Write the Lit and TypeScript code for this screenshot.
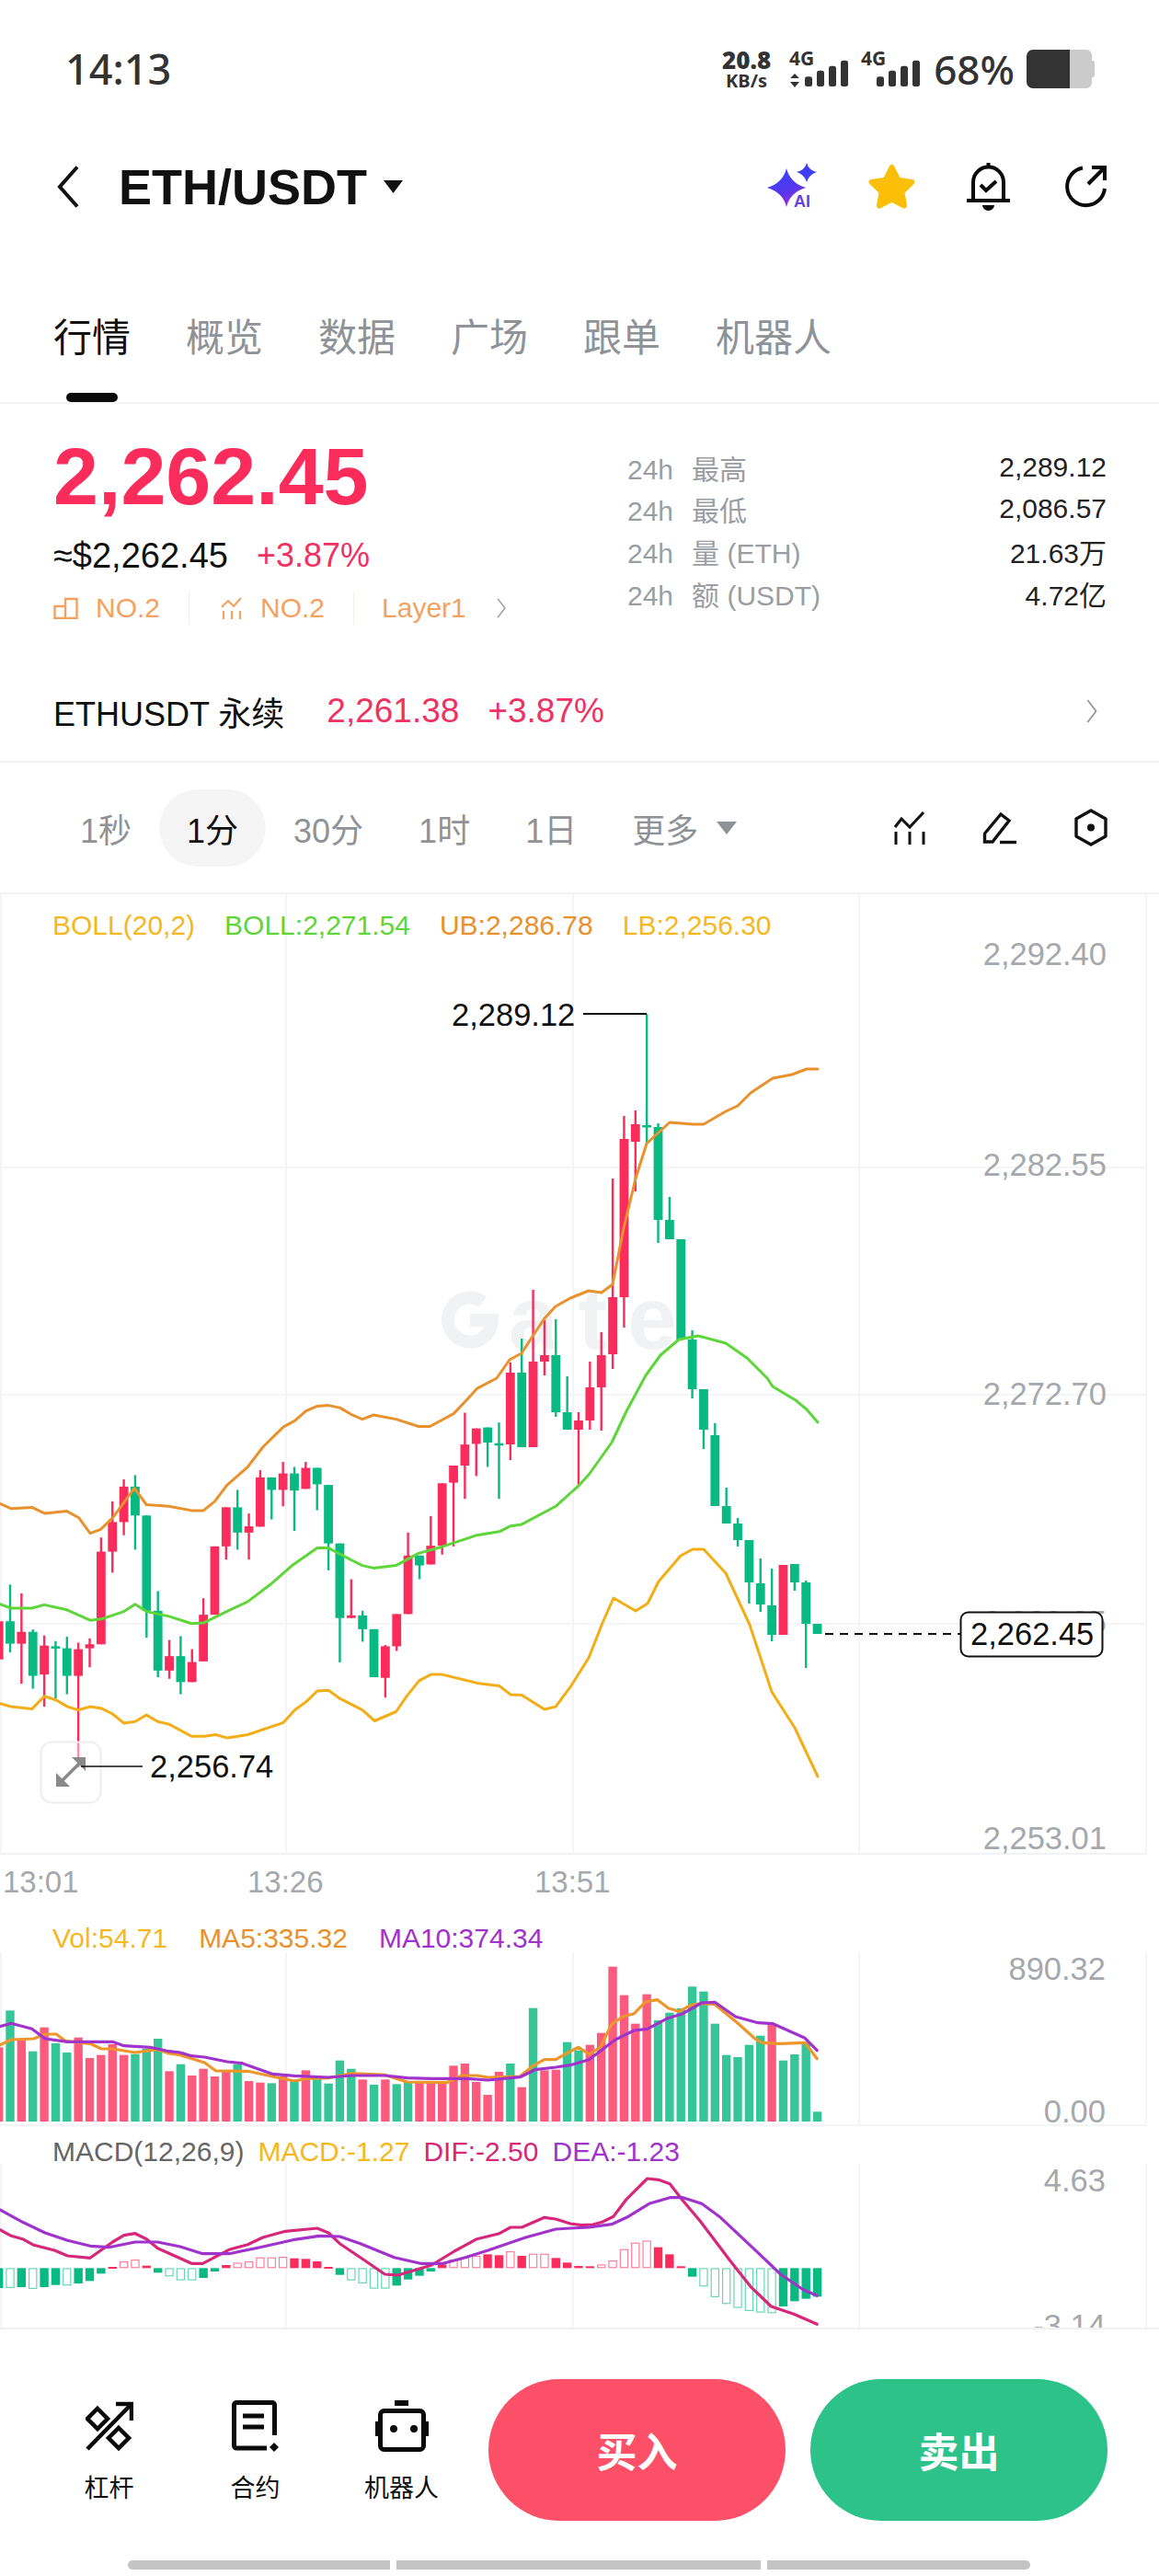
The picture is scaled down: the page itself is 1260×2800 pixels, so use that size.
import { LitElement, html, svg, css } from 'lit';
import { customElement } from 'lit/decorators.js';

// chart numbers were read off zoomed crops, so most series keep the crop's own
// coordinates and get converted to page pixels here
const RED = '#fa2c5c';
const GREEN = '#08b981';
const cx = (k: number) => 11 + 12.36 * k;
const x5 = (z: number) => z / 2.45;
const x6 = (z: number) => 620 + z / 2.45;
const y5 = (z: number) => 1500 + z / 2.8;
const y7 = (z: number) => 2060 + z / 3;

type Candle = [number, number, number, number, 'r' | 'g'];

// k = -1 .. 43: wick top, body top, body bottom, wick bottom
const candlesLeft: Candle[] = ([
  [740, 740, 856, 960, 'r'], [628, 740, 808, 835, 'g'], [655, 772, 808, 930, 'r'], [765, 772, 906, 945, 'g'],
  [783, 814, 902, 1000, 'r'], [800, 816, 822, 975, 'g'], [787, 822, 906, 962, 'g'], [805, 825, 906, 1185, 'r'],
  [792, 810, 822, 880, 'r'], [485, 528, 810, 810, 'r'], [375, 438, 528, 592, 'r'], [308, 330, 438, 478, 'r'],
  [295, 330, 418, 522, 'g'], [418, 418, 708, 790, 'g'], [648, 708, 890, 910, 'g'], [797, 846, 890, 915, 'r'],
  [785, 846, 925, 962, 'g'], [825, 864, 925, 925, 'r'], [670, 720, 862, 862, 'r'], [512, 512, 720, 720, 'r'],
  [393, 393, 512, 552, 'r'], [340, 393, 470, 522, 'g'], [412, 451, 470, 552, 'r'], [280, 302, 452, 452, 'r'],
  [302, 302, 340, 430, 'g'], [255, 290, 340, 390, 'r'], [270, 290, 342, 465, 'g'], [255, 273, 337, 337, 'r'],
  [273, 273, 323, 402, 'g'], [325, 325, 503, 585, 'g'], [503, 503, 730, 865, 'g'], [612, 722, 730, 730, 'r'],
  [708, 722, 764, 802, 'g'], [764, 764, 910, 910, 'g'], [812, 816, 912, 972, 'r'], [718, 718, 816, 830, 'r'],
  [470, 540, 718, 718, 'r'], [540, 540, 570, 612, 'g'], [420, 510, 567, 567, 'r'], [320, 320, 510, 537, 'r'],
  [266, 266, 318, 512, 'r'], [105, 202, 266, 367, 'r'], [153, 153, 200, 298, 'r'], [150, 150, 196, 270, 'g'],
  [135, 198, 203, 367, 'g'],
] as Candle[]).map(([a, b, c, d, e]) => [y5(a), y5(b), y5(c), y5(d), e] as Candle);

// k = 44 .. 71, already in page pixels
const candlesRight: Candle[] = [
  [1483, 1494, 1572, 1589, 'r'], [1457, 1494, 1575, 1575, 'g'], [1404, 1482, 1575, 1575, 'r'], [1437, 1475, 1482, 1497, 'r'],
  [1436, 1475, 1537, 1542, 'g'], [1498, 1537, 1556, 1556, 'g'], [1537, 1546, 1556, 1618, 'r'], [1482, 1510, 1546, 1556, 'r'],
  [1450, 1475, 1510, 1557, 'r'], [1283, 1412, 1474, 1490, 'r'], [1215, 1240, 1412, 1445, 'r'], [1209, 1224, 1243, 1297, 'r'],
  [1104, 1225, 1227, 1245, 'g'], [1223, 1227, 1328, 1353, 'g'], [1303, 1328, 1349, 1349, 'g'], [1349, 1349, 1458, 1458, 'g'],
  [1448, 1458, 1512, 1522, 'g'], [1512, 1512, 1556, 1577, 'g'], [1549, 1562, 1639, 1639, 'g'], [1619, 1639, 1658, 1658, 'g'],
  [1652, 1658, 1676, 1683, 'g'], [1676, 1676, 1722, 1745, 'g'], [1696, 1723, 1746, 1754, 'g'], [1707, 1747, 1779, 1786, 'g'],
  [1703, 1703, 1779, 1779, 'r'], [1702, 1702, 1722, 1731, 'g'], [1720, 1722, 1767, 1815, 'g'], [1767, 1767, 1778, 1778, 'g'],
];

const pts = (list: number[][], fx: (z: number) => number, fy: (z: number) => number) =>
  list.map(([a, b]) => `${fx(a).toFixed(1)},${fy(b).toFixed(1)}`).join(' ');
const raw = (list: number[][]) => list.map((p) => p.join(',')).join(' ');

const upperBand = [
  pts([[0, 382], [30, 397], [85, 393], [120, 412], [178, 405], [210, 425], [240, 472], [268, 460], [300, 425], [358, 335], [390, 385], [450, 390], [510, 403], [542, 403], [572, 375], [605, 325], [660, 270], [700, 210], [755, 148], [785, 130], [815, 100], [845, 85], [875, 83], [905, 90], [935, 110], [965, 125], [995, 112], [1055, 125], [1115, 147], [1145, 147], [1208, 108], [1240, 70], [1270, 32], [1323, 0]], x5, y5),
  raw([[554, 1480], [567, 1473], [580, 1453], [592, 1435], [604, 1422], [620, 1413], [640, 1405], [654, 1407], [666, 1398], [678, 1337], [691, 1283], [703, 1245], [716, 1233], [728, 1222], [753, 1224], [765, 1224], [789, 1210], [802, 1204], [816, 1190], [840, 1174], [861, 1170], [877, 1164], [889, 1164]]),
].join(' ');

const midBand = [
  pts([[0, 688], [30, 700], [85, 700], [118, 690], [178, 705], [240, 737], [270, 733], [330, 710], [360, 688], [390, 710], [450, 725], [510, 747], [542, 745], [600, 712], [660, 680], [720, 628], [780, 568], [845, 517], [875, 517], [935, 553], [965, 570], [995, 578], [1055, 570], [1115, 533], [1178, 513], [1270, 478], [1330, 467], [1360, 450], [1390, 445], [1480, 390], [1519, 350]], x5, y5),
  raw([[628, 1618], [640, 1605], [665, 1570], [681, 1536], [702, 1497], [718, 1475], [738, 1458], [759, 1454], [789, 1462], [812, 1478], [834, 1500], [840, 1509], [865, 1524], [877, 1534], [889, 1548]]),
].join(' ');

const lowerBand = [
  pts([[0, 990], [30, 1000], [85, 1007], [118, 968], [150, 980], [180, 1000], [208, 1010], [240, 1000], [270, 1005], [300, 1022], [330, 1050], [360, 1045], [390, 1025], [420, 1045], [450, 1053], [510, 1090], [545, 1090], [575, 1085], [605, 1095], [660, 1085], [755, 1048], [785, 1010], [815, 985], [845, 952], [875, 950], [905, 975], [965, 1010], [998, 1043], [1055, 1015], [1085, 965], [1117, 920], [1148, 902], [1178, 902], [1270, 928], [1330, 937], [1360, 963], [1390, 965], [1450, 1008], [1480, 1000], [1519, 940]], x5, y5),
  raw([[640, 1804], [655, 1766], [667, 1739], [691, 1753], [704, 1745], [716, 1721], [740, 1693], [753, 1686], [765, 1686], [789, 1712], [815, 1768], [839, 1841], [864, 1880], [889, 1933]]),
].join(' ');

// volume tops, k = -1 .. 71
const volTops = [505, 385, 483, 518, 440, 492, 522, 473, 540, 530, 495, 530, 527, 510, 477, 583, 560, 597, 575, 600, 580, 560, 615, 620, 622, 600, 615, 580, 605, 623, 548, 575, 610, 627, 610, 625, 617, 620, 620, 620, 565, 558, 618, 660, 585, 558, 635, 377, 580, 578, 488, 515, 497, 458, 242, 335, 428, 332, 417, 392, 378, 307, 323, 428, 530, 537, 497, 467, 430, 548, 528, 490, 715];
const volDirs = 'rgrgrggrrrrrgggrgrrrrgrrgrgrggggrgrggrrrrrrrrgrgrrggrrrrrrggggggggggrgg';
// candle colours drive most bars but the crop disagrees in places, so they get their own string
const volColor = (k: number) => (volDirs[k + 1] === 'r' ? '#fd5b7d' : '#36c596');

const ma5 = [
  pts([[0, 497], [30, 480], [90, 477], [120, 462], [150, 462], [175, 485], [240, 493], [270, 510], [300, 510], [360, 522], [420, 512], [450, 525], [480, 530], [545, 555], [575, 582], [660, 583], [725, 600], [785, 615], [815, 607], [875, 605], [935, 590], [1025, 595], [1055, 607], [1085, 618], [1190, 620], [1230, 597], [1270, 597], [1300, 603], [1385, 600], [1420, 565], [1450, 545], [1480, 545], [1519, 518]], x5, y7),
  pts([[22, 505], [50, 528], [80, 505], [110, 430], [140, 405], [170, 395], [200, 357], [232, 350], [262, 378], [290, 388], [320, 368], [350, 362], [385, 365], [415, 395], [445, 425], [490, 475], [510, 490], [560, 493], [625, 490], [657, 542]], x6, y7),
].join(' ');

const ma10 = [
  pts([[0, 437], [30, 427], [85, 445], [120, 477], [180, 487], [300, 487], [330, 500], [400, 505], [450, 518], [480, 522], [510, 533], [545, 537], [605, 552], [645, 557], [725, 592], [785, 598], [875, 603], [935, 597], [1025, 597], [1085, 605], [1150, 607], [1240, 607], [1300, 612], [1385, 602], [1425, 578], [1480, 570], [1519, 563]], x5, y7),
  pts([[50, 545], [120, 480], [170, 450], [205, 445], [260, 410], [300, 395], [350, 360], [385, 358], [440, 405], [500, 425], [540, 428], [625, 475], [657, 515]], x6, y7),
].join(' ');

const dif = [
  pts([[0, 1100], [30, 1120], [60, 1130], [90, 1150], [145, 1167], [180, 1185], [240, 1192], [300, 1140], [330, 1118], [360, 1112], [390, 1130], [420, 1160], [510, 1210], [540, 1210], [610, 1165], [660, 1148], [700, 1125], [760, 1105], [845, 1095], [875, 1110], [905, 1145], [965, 1195], [1025, 1245], [1060, 1248], [1150, 1215], [1210, 1170], [1270, 1130], [1330, 1112], [1360, 1092], [1390, 1092], [1450, 1060], [1480, 1065], [1519, 1080]], x5, y7),
  pts([[30, 1085], [60, 1083], [85, 1075], [115, 1057], [150, 1000], [205, 933], [235, 937], [265, 950], [300, 1005], [345, 1070], [385, 1135], [425, 1200], [480, 1285], [535, 1350], [595, 1375], [657, 1408]], x6, y7),
].join(' ');

const dea = [
  pts([[0, 1035], [60, 1075], [120, 1110], [180, 1135], [240, 1153], [290, 1157], [360, 1140], [420, 1140], [480, 1155], [540, 1178], [610, 1178], [690, 1158], [780, 1133], [850, 1120], [905, 1122], [960, 1145], [1050, 1190], [1120, 1210], [1180, 1210], [1240, 1190], [1300, 1167], [1400, 1125], [1480, 1098], [1519, 1095]], x5, y7),
  pts([[50, 1092], [110, 1082], [150, 1060], [210, 1015], [265, 995], [300, 995], [350, 1015], [400, 1060], [500, 1175], [560, 1245], [620, 1295], [657, 1315]], x6, y7),
].join(' ');

// macd bars, k = -1 .. 71: far end of the bar, h = hollow
const ZERO = 1225;
const macd: [number, boolean][] = [
  [1290, false], [1290, true], [1287, false], [1293, true], [1287, false], [1280, false], [1282, true], [1275, false],
  [1267, false], [1243, false], [1221, false], [1203, true], [1197, true], [1217, false], [1240, false], [1252, true],
  [1265, true], [1265, true], [1257, false], [1236, false], [1215, false], [1207, true], [1203, true], [1190, true],
  [1190, true], [1188, true], [1193, false], [1195, false], [1203, false], [1221, false], [1247, false], [1265, true],
  [1275, true], [1292, true], [1292, true], [1282, false], [1262, false], [1250, false], [1236, false], [1213, false],
  [1197, true], [1190, true], [1185, true], [1180, false], [1183, false], [1170, true], [1185, false], [1178, true],
  [1178, true], [1192, false], [1207, false], [1218, false], [1219, false], [1213, true], [1200, true], [1163, true],
  [1142, true], [1135, true], [1157, false], [1180, false], [1219, false], [1253, false], [1285, true], [1320, true],
  [1342, true], [1355, true], [1365, true], [1370, true], [1372, true], [1350, false], [1333, false], [1325, false], [1318, false],
];

const chevron = (w: number, h: number, color: string) => html`
  <svg width=${w} height=${h} viewBox="0 0 14 28" fill="none" stroke=${color} stroke-width="1.8">
    <path d="M2 1 L12 14 L2 27" />
  </svg>`;

@customElement('app-root')
export class AppRoot extends LitElement {
  static styles = css`
    :host {
      display: block;
      width: 1260px;
      height: 2800px;
      overflow: hidden;
      background: #fff;
      color: #111;
      font-family: 'Liberation Sans', 'Noto Sans CJK SC', sans-serif;
    }
    svg { display: block; flex: none; }
    svg text { font-family: 'Liberation Sans', 'Noto Sans CJK SC', sans-serif; }

    .status {
      height: 150px;
      display: flex;
      align-items: center;
      padding: 0 70px 0 71px;
      color: #333;
      font-family: 'Noto Sans', sans-serif;
    }
    .clock { font-size: 45px; font-weight: 500; line-height: 50px; }
    .net {
      margin-left: auto;
      display: flex;
      flex-direction: column;
      align-items: center;
      font-weight: 700;
    }
    .net b { font-size: 26px; line-height: 25px; }
    .net span { font-size: 20px; line-height: 20px; }
    .sig { margin-left: 20px; }
    .sig + .sig { margin-left: 14px; }
    .sig text { font-family: 'Noto Sans', sans-serif; font-weight: 700; font-size: 21px; fill: #333; }
    .pct { margin-left: 15px; font-size: 44px; font-weight: 500; line-height: 50px; }
    .batt { margin-left: 13px; }

    .nav {
      height: 106px;
      display: flex;
      align-items: center;
      padding: 0 57px 0 62px;
    }
    .pair { margin-left: 43px; font-size: 54px; font-weight: 700; line-height: 60px; }
    .caret { margin-left: 18px; }
    .nav-icons { margin-left: auto; display: flex; align-items: center; }
    .ai { margin-right: 55px; }
    .fav { margin-right: 55px; }
    .bell { margin-right: 59px; }

    .tabs {
      height: 183px;
      box-sizing: border-box;
      padding: 84px 0 0 58px;
      display: flex;
      gap: 60px;
      border-bottom: 2px solid #f3f3f3;
    }
    .tab {
      display: flex;
      flex-direction: column;
      align-items: center;
      font-size: 42px;
      line-height: 56px;
      color: #8f9397;
    }
    .tab.on { color: #111; }
    .tab i {
      width: 56px;
      height: 11px;
      margin-top: 31px;
      border-radius: 6px;
    }
    .tab.on i { background: #0a0a0a; }

    .summary {
      height: 280px;
      box-sizing: border-box;
      display: grid;
      grid-template-columns: 682px 1fr;
      padding-right: 57px;
    }
    .left { padding: 29px 0 0 58px; }
    .price {
      font-size: 88px;
      font-weight: 700;
      line-height: 100px;
      color: ${css([RED] as unknown as TemplateStringsArray)};
    }
    .sub {
      margin-top: 14px;
      display: flex;
      gap: 31px;
      line-height: 44px;
      font-size: 38px;
    }
    .sub em { font-style: normal; font-size: 36px; color: #ee3263; }
    .tags {
      margin-top: 15px;
      display: flex;
      align-items: center;
      height: 40px;
      font-size: 30px;
      color: #f4a261;
    }
    .tags span { margin-left: 19px; }
    .tags .layer { margin-left: 0; }
    .tags u {
      width: 1px;
      height: 36px;
      margin: 0 34px 0 31px;
      background: #f6ede5;
    }
    .tags u.wide { margin-right: 30px; }
    .tags .more { margin-left: 31px; }
    .stats { padding-top: 46px; }
    .stat {
      height: 45.6px;
      display: flex;
      align-items: center;
      justify-content: space-between;
      font-size: 30px;
      color: #222;
    }
    .stat label { color: #9a9ea3; }
    .stat label span { margin-right: 20px; }

    .perp {
      height: 108px;
      display: flex;
      align-items: center;
      padding: 0 65px 0 58px;
      border-bottom: 2px solid #f3f3f3;
      font-size: 37px;
      color: #ee3263;
    }
    .perp .name { font-size: 36px; color: #111; margin-right: 46px; }
    .perp .chg { margin-left: 31px; }
    .perp svg { margin-left: auto; }

    .periods {
      height: 141px;
      display: flex;
      align-items: center;
      padding: 0 56px 0 57px;
      border-bottom: 2px solid #f3f3f3;
      font-size: 36px;
      color: #8f9397;
    }
    .period {
      height: 84px;
      padding: 0 30px;
      border-radius: 42px;
      display: flex;
      align-items: center;
    }
    .period.on { background: #f5f5f5; color: #111; }
    .period svg { margin-left: 20px; }
    .tools { margin-left: auto; display: flex; align-items: center; }
    .tools svg + svg { margin-left: 62px; }

    .main { position: relative; height: 1101px; }
    .legend {
      display: flex;
      font-size: 30px;
      line-height: 36px;
      white-space: nowrap;
      padding-left: 57px;
    }
    .main .legend { position: absolute; left: 0; top: 16px; gap: 32px; }
    .vol-legend { padding-top: 16px; height: 49px; box-sizing: border-box; gap: 34px; }
    .macd-legend { padding-top: 10px; height: 41px; box-sizing: border-box; gap: 15px; }
    .macd-pane { border-bottom: 2px solid #f1f1f1; }
    .yellow { color: #f5b81f; }
    .lime { color: #5ed63a; }
    .orange { color: #e8912d; }
    .purple { color: #a033cc; }
    .grey { color: #666; }
    .pink { color: #d6277a; }

    .bottom {
      display: flex;
      padding: 54px 56px 0 39px;
    }
    .action {
      width: 159px;
      height: 154px;
      box-sizing: border-box;
      padding-top: 23px;
      display: flex;
      flex-direction: column;
      align-items: center;
      font-size: 27px;
      line-height: 36px;
    }
    .action span { margin-top: 22px; }
    .btn {
      width: 323px;
      height: 154px;
      border-radius: 77px;
      display: flex;
      align-items: center;
      justify-content: center;
      color: #fff;
      font-size: 44px;
      font-weight: 700;
    }
    .buy { margin-left: 15px; background: #fb5068; }
    .sell { margin-left: 27px; background: #2cc289; }
    .home {
      margin-top: 43px;
      padding-left: 139px;
      display: flex;
      gap: 7px;
    }
    .home i { height: 10px; background: #c4c4c4; }
    .home i:first-child { width: 285px; border-radius: 5px 0 0 5px; }
    .home i:nth-child(2) { width: 396px; }
    .home i:last-child { width: 286px; border-radius: 0 5px 5px 0; }
  `;

  private bars(x: number) {
    const tops = [165, 145, 130, 112];
    return tops.map((t, i) => {
      const h = (197 - t) / 3;
      return svg`<rect x=${x + i * 13} y=${40 - h} width="8" height=${h} rx="2.5" fill="#333" />`;
    });
  }

  private grid(top: number, bottom: number, hs: number[]) {
    return svg`
      <g stroke="#f1f2f4" stroke-width="1.5">
        ${[1, 311, 623, 934, 1246].map((x) => svg`<line x1=${x} x2=${x} y1=${top} y2=${bottom} />`)}
        ${hs.map((y) => svg`<line x1="0" x2="1246" y1=${y} y2=${y} />`)}
      </g>`;
  }

  private candle(c: Candle, k: number) {
    const fill = c[4] === 'r' ? RED : GREEN;
    const x = cx(k);
    return svg`
      <rect x=${x - 1.2} y=${c[0]} width="2.4" height=${c[3] - c[0]} fill=${fill} />
      <rect x=${x - 4.9} y=${c[1]} width="9.8" height=${Math.max(c[2] - c[1], 2.5)} fill=${fill} />`;
  }

  private mainChart() {
    const axis = '#a5a8ad';
    return svg`
      <svg width="1260" height="1101" viewBox="0 974 1260 1101">
        ${this.grid(974, 2017, [1271, 1518, 1767, 2017])}
        <line x1="0" x2="1246" y1="2017" y2="2017" stroke="#f1f2f4" stroke-width="2" />
        <g fill="#f1f2f3">
          <path d="M525 1417 A24 24 0 1 0 535 1437 L511 1437" fill="none" stroke="#f1f2f3" stroke-width="14" />
          <text x="553" y="1468" font-size="96" font-weight="700" letter-spacing="22">ate</text>
        </g>
        ${candlesLeft.map((c, i) => this.candle(c, i - 1))}
        ${candlesRight.map((c, i) => this.candle(c, i + 44))}
        <g fill="none" stroke-width="3" stroke-linejoin="round" stroke-linecap="round">
          <polyline points=${upperBand} stroke="#e8912d" />
          <polyline points=${lowerBand} stroke="#f3ae17" />
          <polyline points=${midBand} stroke="#5ed63a" />
        </g>
        <g font-size="34.5" fill=${axis} text-anchor="end">
          <text x="1203" y="1051">2,292.40</text>
          <text x="1203" y="1280">2,282.55</text>
          <text x="1203" y="1529">2,272.70</text>
          <text x="1203" y="1777">2,262.85</text>
          <text x="1203" y="2012">2,253.01</text>
        </g>
        <g font-size="33" fill=${axis}>
          <text x="3" y="2059">13:01</text>
          <text x="269" y="2059">13:26</text>
          <text x="581" y="2059">13:51</text>
        </g>
        <line x1="634" x2="703" y1="1104" y2="1104" stroke="#111" stroke-width="2" />
        <text x="491" y="1117" font-size="34.5" fill="#111">2,289.12</text>
        <rect x="44.5" y="1895.5" width="65" height="66" rx="12" fill="#fff" fill-opacity="0.45" stroke="#eeeeee" stroke-width="2" />
        <g fill="#8a8a8a">
          <path d="M61 1944 V1929 L76 1944 Z" />
          <path d="M93 1912 V1927 L78 1912 Z" />
        </g>
        <path d="M66 1939 L88 1917" stroke="#8a8a8a" stroke-width="3.5" />
        <line x1="88" x2="155" y1="1922" y2="1922" stroke="#111" stroke-width="1.5" />
        <text x="163" y="1934" font-size="34.5" fill="#111">2,256.74</text>
        <line x1="897" x2="1044" y1="1778" y2="1778" stroke="#111" stroke-width="2" stroke-dasharray="9 7" />
        <rect x="1044.5" y="1754.5" width="154" height="48" rx="8" fill="#fff" stroke="#111" stroke-width="2" />
        <text x="1055" y="1790" font-size="34.5" fill="#111">2,262.45</text>
      </svg>`;
  }

  private volChart() {
    return svg`
      <svg width="1260" height="189" viewBox="0 2125 1260 189">
        ${this.grid(2125, 2313, [2313])}
        ${volTops.map((t, i) => {
          const top = y7(t);
          return svg`<rect x=${cx(i - 1) - 4.7} y=${top} width="9.4" height=${2309 - top} fill=${volColor(i - 1)} />`;
        })}
        <g fill="none" stroke-width="3.2" stroke-linejoin="round" stroke-linecap="round">
          <polyline points=${ma5} stroke="#ed962b" />
          <polyline points=${ma10} stroke="#a033cc" />
        </g>
        <g font-size="34.5" fill="#a5a8ad" text-anchor="end">
          <text x="1202" y="2155">890.32</text>
          <text x="1202" y="2310">0.00</text>
        </g>
      </svg>`;
  }

  private macdChart() {
    const zero = y7(ZERO);
    return svg`
      <svg width="1260" height="178" viewBox="0 2355 1260 178">
        ${this.grid(2355, 2533, [])}
        ${macd.map(([end, hollow], i) => {
          const y = y7(end);
          const up = end < ZERO;
          const top = Math.min(y, zero);
          const h = Math.max(Math.abs(y - zero), 2);
          const x = cx(i - 1) - 4.7;
          const color = up ? RED : GREEN;
          return hollow
            ? svg`<rect x=${x + 0.6} y=${top + 0.6} width="8.2" height=${h - 1.2} fill="#fff" stroke=${color} stroke-opacity="0.6" stroke-width="1.2" />`
            : svg`<rect x=${x} y=${top} width="9.4" height=${h} fill=${color} />`;
        })}
        <g fill="none" stroke-width="3.2" stroke-linejoin="round" stroke-linecap="round">
          <polyline points=${dif} stroke="#d6277a" />
          <polyline points=${dea} stroke="#a033cc" />
        </g>
        <g font-size="34.5" fill="#a5a8ad" text-anchor="end">
          <text x="1202" y="2385">4.63</text>
          <text x="1202" y="2543">-3.14</text>
        </g>
      </svg>`;
  }

  render() {
    return html`
      <div class="status">
        <div class="clock">14:13</div>
        <div class="net"><b>20.8</b><span>KB/s</span></div>
        <svg class="sig" width="64" height="42" viewBox="0 0 64 42">
          <text x="0" y="17">4G</text>
          <path d="M6 26 L11 31 H1 Z M6 41 L1 35 H11 Z" fill="#333" transform="translate(0,0)" />
          ${this.bars(17)}
        </svg>
        <svg class="sig" width="64" height="42" viewBox="0 0 64 42">
          <text x="0" y="17">4G</text>
          ${this.bars(17)}
        </svg>
        <div class="pct">68%</div>
        <svg class="batt" width="74" height="42" viewBox="0 0 74 42">
          <path d="M47 0 H65 a6 6 0 0 1 6 6 V12 h1 a2 2 0 0 1 2 2 V28 a2 2 0 0 1-2 2 h-1 V36 a6 6 0 0 1-6 6 H47 Z" fill="#cbcbcb" />
          <path d="M47 0 H7 a7 7 0 0 0-7 7 V35 a7 7 0 0 0 7 7 H47 Z" fill="#333" />
        </svg>
      </div>

      <div class="nav">
        <svg width="24" height="46" viewBox="0 0 24 46" fill="none" stroke="#111" stroke-width="4">
          <path d="M22 1.5 L3 23 L22 44.5" />
        </svg>
        <div class="pair">ETH/USDT</div>
        <svg class="caret" width="21" height="14" viewBox="0 0 21 14"><path d="M0 0 H21 L10.5 14 Z" fill="#111" /></svg>
        <div class="nav-icons">
          <svg class="ai" width="55" height="52" viewBox="0 0 55 52">
            <defs>
              <linearGradient id="aiFill" x1="0.3" y1="0" x2="0.7" y2="1">
                <stop offset="0" stop-color="#2f45ff" />
                <stop offset="0.6" stop-color="#5a35ea" />
                <stop offset="1" stop-color="#b02bd8" />
              </linearGradient>
            </defs>
            <path d="M22 6 Q26 22 43 27 Q26 32 22 48 Q18 32 1 27 Q18 22 22 6 Z" fill="url(#aiFill)" />
            <path d="M44 0 Q46 8 55 10 Q46 13 44 21 Q42 13 33 10 Q42 8 44 0 Z" fill="#3f3df0" />
            <text x="30" y="48" font-size="18" font-weight="700" fill="#6a3fd8">AI</text>
          </svg>
          <svg class="fav" width="53" height="50" viewBox="0 0 53 50">
            <polygon points="26.5,4 33.3,17.7 48.4,19.9 37.4,30.6 40,45.6 26.5,38.5 13,45.6 15.6,30.6 4.6,19.9 19.7,17.7"
              fill="#fcbf07" stroke="#fcbf07" stroke-width="6" stroke-linejoin="round" />
          </svg>
          <svg class="bell" width="47" height="52" viewBox="0 0 47 52" fill="none" stroke="#0a0a0a" stroke-width="4">
            <path d="M7 41 V21 a16.5 16.5 0 0 1 33 0 V41" />
            <path d="M0 41 H47" />
            <path d="M23.5 0 V5" />
            <path d="M15 24 L21 30 L32 20" />
            <path d="M17 46 H30 a6.5 6 0 0 1-13 0 Z" fill="#0a0a0a" stroke="none" />
          </svg>
          <svg width="46" height="46" viewBox="0 0 46 46" fill="none" stroke="#0a0a0a" stroke-width="4">
            <path d="M20 2.5 A20.5 20.5 0 1 0 44 25" />
            <path d="M26 20 L43 3" />
            <path d="M30 2 H44 V16" />
          </svg>
        </div>
      </div>

      <div class="tabs">
        ${['行情', '概览', '数据', '广场', '跟单', '机器人'].map(
          (t, i) => html`<div class="tab ${i === 0 ? 'on' : ''}">${t}${i === 0 ? html`<i></i>` : ''}</div>`,
        )}
      </div>

      <div class="summary">
        <div class="left">
          <div class="price">2,262.45</div>
          <div class="sub">≈$2,262.45 <em>+3.87%</em></div>
          <div class="tags">
            <svg width="27" height="24" viewBox="0 0 27 24" fill="none" stroke="#f4a261" stroke-width="2.4">
              <path d="M1.5 23 V10 H13 V23 Z M13 23 V2 H25.5 V23 Z" />
            </svg>
            <span>NO.2</span>
            <u></u>
            <svg width="24" height="24" viewBox="0 0 24 24" fill="none" stroke="#f4a261" stroke-width="2.2">
              <path d="M1 11 L8 4 L14 10 L22 1" />
              <path d="M3 15 V24 M12 15 V24 M21 15 V24" />
            </svg>
            <span>NO.2</span>
            <u class="wide"></u>
            <span class="layer">Layer1</span>
            <div class="more">${chevron(14, 22, '#9a9ea3')}</div>
          </div>
        </div>
        <div class="stats">
          <div class="stat"><label><span>24h</span>最高</label><div>2,289.12</div></div>
          <div class="stat"><label><span>24h</span>最低</label><div>2,086.57</div></div>
          <div class="stat"><label><span>24h</span>量 (ETH)</label><div>21.63万</div></div>
          <div class="stat"><label><span>24h</span>额 (USDT)</label><div>4.72亿</div></div>
        </div>
      </div>

      <div class="perp">
        <div class="name">ETHUSDT 永续</div>
        <div>2,261.38</div>
        <div class="chg">+3.87%</div>
        ${chevron(16, 26, '#8f9397')}
      </div>

      <div class="periods">
        <div class="period">1秒</div>
        <div class="period on">1分</div>
        <div class="period">30分</div>
        <div class="period">1时</div>
        <div class="period">1日</div>
        <div class="period">更多
          <svg width="22" height="14" viewBox="0 0 22 14"><path d="M0 0 H22 L11 14 Z" fill="#8f9397" /></svg>
        </div>
        <div class="tools">
          <svg width="34" height="36" viewBox="0 0 34 36" fill="none" stroke="#111" stroke-width="3">
            <path d="M1 17 L8 8 L17 17 L32 1" />
            <path d="M2 22 V36 M17 22 V36 M32 22 V36" />
          </svg>
          <svg width="38" height="36" viewBox="0 0 38 36" fill="none" stroke="#111" stroke-width="3.4">
            <path d="M2.5 33 V24 L20 3 L29 10 L11 33 Z" />
            <path d="M19 33.5 H37" />
          </svg>
          <svg width="36" height="41" viewBox="0 0 36 41" fill="none" stroke="#111" stroke-width="3.4">
            <path d="M18 2 L34 11 V30 L18 39 L2 30 V11 Z" stroke-linejoin="round" />
            <circle cx="18" cy="20.5" r="4" fill="#111" stroke="none" />
          </svg>
        </div>
      </div>

      <div class="main">
        ${this.mainChart()}
        <div class="legend">
          <span class="yellow">BOLL(20,2)</span>
          <span class="lime">BOLL:2,271.54</span>
          <span class="orange">UB:2,286.78</span>
          <span class="yellow">LB:2,256.30</span>
        </div>
      </div>

      <div class="legend vol-legend">
        <span class="yellow">Vol:54.71</span>
        <span class="orange">MA5:335.32</span>
        <span class="purple">MA10:374.34</span>
      </div>
      ${this.volChart()}

      <div class="legend macd-legend">
        <span class="grey">MACD(12,26,9)</span>
        <span class="yellow">MACD:-1.27</span>
        <span class="pink">DIF:-2.50</span>
        <span class="purple">DEA:-1.23</span>
      </div>
      <div class="macd-pane">${this.macdChart()}</div>

      <div class="bottom">
        <div class="action">
          <svg width="52" height="56" viewBox="0 0 52 56" fill="none" stroke="#0a0a0a" stroke-width="4.5">
            <path d="M2 53 L49 5" />
            <path d="M33 4 H50 V22" />
            <path d="M13 9 L24 20 L13 31 L2 20 Z" />
            <path d="M36 30 L47 41 L36 52 L25 41 Z" />
          </svg>
          <span>杠杆</span>
        </div>
        <div class="action">
          <svg width="52" height="56" viewBox="0 0 52 56" fill="none" stroke="#0a0a0a" stroke-width="5">
            <path d="M38 52 H5 a2.500 2.500 0 0 1-2.500-2.500 V5 a2.500 2.500 0 0 1 2.500-2.500 H44 a2.500 2.500 0 0 1 2.500 2.500 V38" />
            <path d="M12 17 H35 M12 29 H35" />
            <path d="M46 46 L51 51 L46 56 L41 51 Z" fill="#0a0a0a" stroke="none" />
          </svg>
          <span>合约</span>
        </div>
        <div class="action">
          <svg width="58" height="56" viewBox="0 0 58 56">
            <rect x="21" y="0" width="15" height="6" fill="#0a0a0a" />
            <rect x="5.500" y="11.500" width="47" height="42" rx="4" fill="none" stroke="#0a0a0a" stroke-width="5" />
            <rect x="0" y="23" width="4" height="16" fill="#0a0a0a" />
            <rect x="54" y="23" width="4" height="16" fill="#0a0a0a" />
            <circle cx="20" cy="31" r="4" fill="#0a0a0a" />
            <circle cx="42" cy="31" r="4" fill="#0a0a0a" />
          </svg>
          <span>机器人</span>
        </div>
        <div class="btn buy">买入</div>
        <div class="btn sell">卖出</div>
      </div>
      <div class="home"><i></i><i></i><i></i></div>
    `;
  }
}
